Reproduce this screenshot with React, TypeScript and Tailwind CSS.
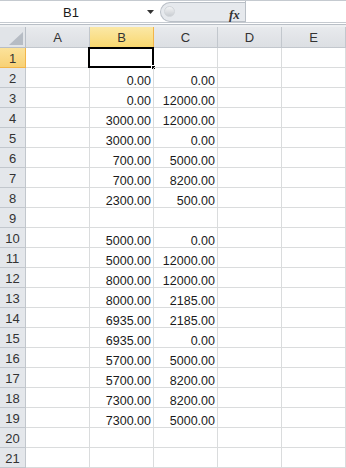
import React from "react";

const data: [string, string][] = [
  ["", ""],
  ["0.00", "0.00"],
  ["0.00", "12000.00"],
  ["3000.00", "12000.00"],
  ["3000.00", "0.00"],
  ["700.00", "5000.00"],
  ["700.00", "8200.00"],
  ["2300.00", "500.00"],
  ["", ""],
  ["5000.00", "0.00"],
  ["5000.00", "12000.00"],
  ["8000.00", "12000.00"],
  ["8000.00", "2185.00"],
  ["6935.00", "2185.00"],
  ["6935.00", "0.00"],
  ["5700.00", "5000.00"],
  ["5700.00", "8200.00"],
  ["7300.00", "8200.00"],
  ["7300.00", "5000.00"],
  ["", ""],
  ["", ""],
];

const cols = ["A", "B", "C", "D", "E"];

export default function App() {
  return (
    <div
      className="w-[346px] h-[468px] bg-white overflow-hidden text-[#1a1a1a]"
      style={{ fontFamily: '"Liberation Sans", Arial, sans-serif' }}
    >
      {/* formula bar */}
      <div className="h-[27px] flex flex-col">
        <div className="h-[23px] flex border-t border-b border-[#c5cad0]">
          <div className="w-[158px] bg-white flex items-center relative">
            <span className="w-[142px] text-center text-[13px] leading-none pt-[1px]">B1</span>
            <svg className="absolute left-[147px] top-[9px]" width="8" height="4" viewBox="0 0 8 4">
              <path d="M0 0 H7 L3.5 4 Z" fill="#333" />
            </svg>
          </div>
          <div className="w-[87px] flex items-center pl-[2px] bg-white">
            <div className="h-[20px] flex-1 rounded-l-full border border-r-0 border-[#b9bfc6] bg-[#e6e9ed] flex items-center pl-[3px] relative">
              <div className="w-[11px] h-[11px] rounded-full bg-gradient-to-b from-[#f3f4f5] to-[#c9cdd2] border border-[#d2d6da]" />
              <span
                className="absolute left-[68px] top-[2px] text-[13px] italic font-bold text-[#333]"
                style={{ fontFamily: '"Liberation Serif", serif' }}
              >
                fx
              </span>
            </div>
          </div>
          <div className="flex-1 bg-white border-l border-[#b9bfc6]" />
        </div>
        <div className="h-[1px] bg-white" />
        <div className="h-[1px] bg-[#b9bfc6]" />
        <div className="h-[2px] bg-[#eef0f2]" />
      </div>

      {/* header row */}
      <div className="flex h-[21px]">
        <div className="w-[26px] h-full bg-[#e1e4e8] border-r border-b border-[#b8bec6] relative">
          <svg className="absolute right-[2px] bottom-[2px]" width="14" height="13" viewBox="0 0 14 13">
            <path d="M14 0 V13 H0 Z" fill="#b6bcc4" />
          </svg>
        </div>
        {cols.map((c) => (
          <div
            key={c}
            className={
              c === "B"
                ? "w-[64px] h-full flex items-center justify-center text-[13px] leading-none pt-[1px] border-r border-b border-[#f2b54a] bg-gradient-to-b from-[#fbe8a6] to-[#f9d86e] text-[#333]"
                : "w-[64px] h-full flex items-center justify-center text-[13px] leading-none pt-[1px] border-r border-b border-[#c2c7cd] bg-gradient-to-b from-[#e8eaed] to-[#dcdfe3] text-[#333]"
            }
          >
            {c}
          </div>
        ))}
      </div>

      {/* rows */}
      {data.map((row, i) => {
        const n = i + 1;
        const sel = n === 1;
        return (
          <div key={n} className="flex h-[20px]">
            <div
              className={
                sel
                  ? "w-[26px] h-full flex items-center justify-center text-[13px] leading-none pt-[1px] border-r border-b border-[#f2b54a] bg-gradient-to-b from-[#fbe29a] to-[#f8d175] text-[#333]"
                  : "w-[26px] h-full flex items-center justify-center text-[13px] leading-none pt-[1px] border-r border-b border-[#c2c7cd] bg-[#e4e7eb] text-[#333]"
              }
            >
              {n}
            </div>
            {cols.map((c, ci) => {
              const v = ci === 1 ? row[0] : ci === 2 ? row[1] : "";
              return (
                <div
                  key={c}
                  className="w-[64px] h-full border-r border-b border-[#dadcdd] flex items-end justify-end pr-[2px] text-[12.5px] leading-[12px] relative"
                >
                  {v}
                  {sel && ci === 1 && (
                    <div className="absolute -left-[2px] -top-[1px] -right-[1px] -bottom-[1px] border-2 border-black">
                      <div className="absolute -right-[4px] -bottom-[4px] w-[5px] h-[5px] bg-black border border-white" />
                    </div>
                  )}
                </div>
              );
            })}
          </div>
        );
      })}
    </div>
  );
}
